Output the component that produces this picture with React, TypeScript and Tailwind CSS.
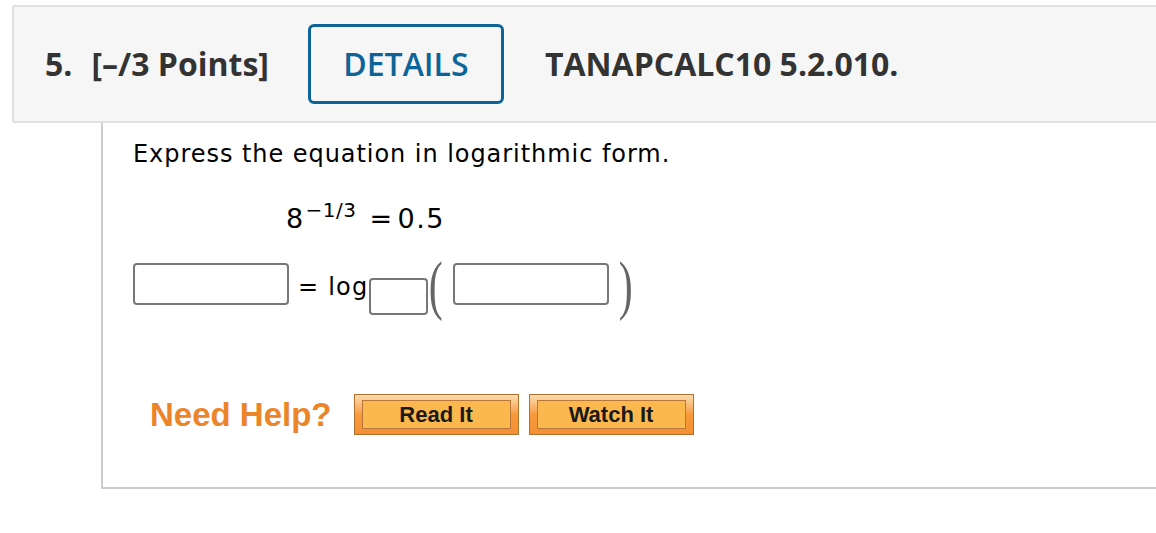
import React from 'react';

// Карточка задания: заголовок с номером и кнопкой DETAILS, ниже условие и поля ответа
function HelpButton({ label }: { label: string }) {
  return (
    <button className="w-[165px] h-[41px] border border-[#b0702e] bg-gradient-to-b from-[#fcdcae] via-[#f79a3c] to-[#f48f33] px-[7px] py-[5px]">
      <span className="flex h-full w-full items-center justify-center border border-[#b8783b] bg-[#fbb84f] text-[22px] font-bold text-[#1a1a1a] [font-family:'Liberation_Sans',Arial,sans-serif]">
        {label}
      </span>
    </button>
  );
}

function AnswerBox({ className }: { className: string }) {
  return <div className={`border-2 border-[#777777] rounded-[4px] bg-white ${className}`} />;
}

function Paren({ ch, className }: { ch: string; className: string }) {
  return (
    <div className={`h-[62px] w-[13px] flex items-center justify-center ${className}`}>
      <span className="inline-block -translate-y-[4px] scale-y-[1.55] text-[42px] leading-none text-[#666666] [font-family:'Liberation_Serif',serif]">
        {ch}
      </span>
    </div>
  );
}

export default function App() {
  return (
    <div className="w-[1156px] h-[533px] overflow-hidden bg-white">
      <div className="w-[1220px] pt-[5px]">
        <header className="ml-[12px] h-[118px] flex items-center border-2 border-[#e0e0e0] rounded-[3px] bg-[#f6f6f6] pl-[31px] text-[32px] text-[#333333] [font-family:'Open_Sans',sans-serif]">
          <span className="font-bold">5.</span>
          <span className="ml-[19px] font-bold">[–/3 Points]</span>
          <div className="ml-[39px] w-[196px] h-[80px] flex items-center justify-center border-[3px] border-[#0d6498] rounded-[6px] text-[#0d6498] font-semibold">
            DETAILS
          </div>
          <span className="ml-[41px] font-bold">TANAPCALC10 5.2.010.</span>
        </header>

        <div className="ml-[101px] h-[366px] border-l-2 border-b-2 border-[#cccccc] pl-[30px] pt-[17px] text-black [font-family:'DejaVu_Sans',Verdana,sans-serif]">
          <p className="text-[24px] leading-[28px] tracking-[0.95px]">Express the equation in logarithmic form.</p>

          <p className="mt-[36px] ml-[153px] text-[27px] leading-[30px] tracking-[1.4px]">
            8<sup className="ml-[1px] text-[20px] top-[-11px] tracking-[0.5px]">−1/3</sup>
            <span className="ml-[13px]">=</span>
            <span className="ml-[4px]">0.5</span>
          </p>

          <div className="mt-[24px] h-[62px] flex items-start">
            <AnswerBox className="mt-[5px] w-[156px] h-[42px]" />
            <span className="mt-[15px] ml-[9px] text-[24px] leading-[28px] tracking-[1.2px]">= log</span>
            <AnswerBox className="mt-[20px] ml-[1px] w-[59px] h-[37px]" />
            <Paren ch="(" className="ml-[1px]" />
            <AnswerBox className="mt-[5px] ml-[11px] w-[156px] h-[42px]" />
            <Paren ch=")" className="ml-[10px]" />
          </div>

          <div className="mt-[74px] h-[41px] flex items-center">
            <span className="ml-[17px] text-[33px] leading-none font-bold text-[#ec8429] [font-family:'Liberation_Sans',Arial,sans-serif]">
              Need Help?
            </span>
            <div className="ml-[22px] flex gap-[10px]">
              <HelpButton label="Read It" />
              <HelpButton label="Watch It" />
            </div>
          </div>
        </div>
      </div>
    </div>
  );
}
